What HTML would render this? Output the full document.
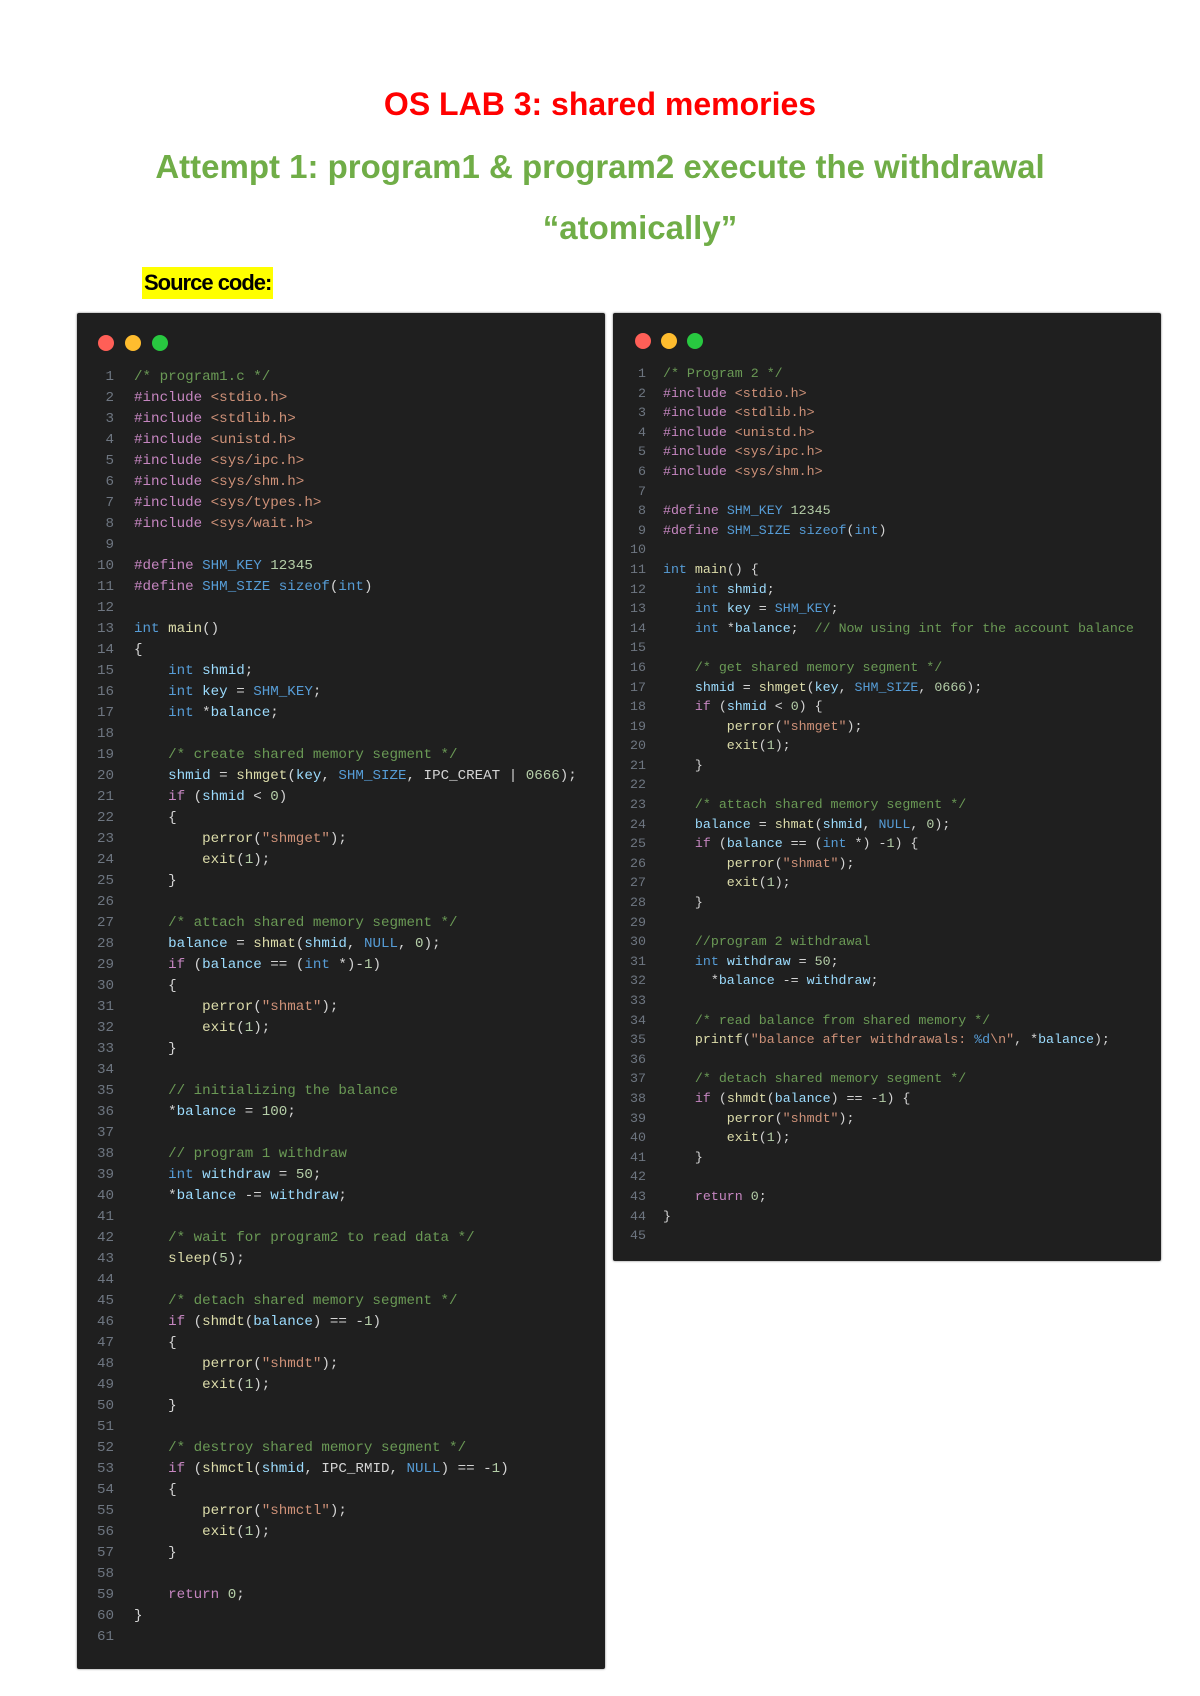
<!DOCTYPE html>
<html><head><meta charset="utf-8"><style>
body{margin:0;background:#fff;width:1200px;height:1696px;position:relative;overflow:hidden;font-family:"Liberation Sans",sans-serif}
.t{position:absolute;left:0;width:1200px;text-align:center;font-weight:bold;letter-spacing:0}
.panel{position:absolute;background:#1f1f1f;border-radius:2px;box-shadow:0 0 2px #777}
.dot{position:absolute;width:16px;height:16px;border-radius:50%}
pre{position:absolute;margin:0;font-family:"Liberation Mono",monospace;color:#d4d4d4;white-space:pre}
.n{color:#6e7681;display:inline-block;text-align:right}
.L .n{width:28px;margin-right:3px}
.R .n{width:22px;margin-right:1px}
.c{color:#6a9955}.p{color:#c586c0}.k{color:#569cd6}.s{color:#ce9178}.m{color:#b5cea8}.v{color:#9cdcfe}.f{color:#dcdcaa}
</style></head><body>
<div class="t" style="top:86px;font-size:32px;color:#ff0000">OS LAB 3: shared memories</div>
<div class="t" style="top:148px;font-size:33px;color:#70ad47">Attempt 1: program1 &amp; program2 execute the withdrawal</div>
<div class="t" style="top:209px;font-size:33px;color:#70ad47;padding-left:40px">“atomically”</div>
<div style="position:absolute;left:142px;top:267px;background:#ffff00;font-weight:bold;font-size:22px;letter-spacing:-1px;padding:1px 2px;line-height:30px">Source code:</div>

<div class="panel" style="left:77px;top:313px;width:528px;height:1356px">
<div class="dot" style="left:21px;top:22px;background:#ff5f57"></div>
<div class="dot" style="left:48px;top:22px;background:#febc2e"></div>
<div class="dot" style="left:75px;top:22px;background:#28c840"></div>
<pre class="L" style="left:9px;top:54px;font-size:14.2px;line-height:21px">
<span class="n">1</span>  <span class="c">/* program1.c */</span>
<span class="n">2</span>  <span class="p">#include</span> <span class="s">&lt;stdio.h&gt;</span>
<span class="n">3</span>  <span class="p">#include</span> <span class="s">&lt;stdlib.h&gt;</span>
<span class="n">4</span>  <span class="p">#include</span> <span class="s">&lt;unistd.h&gt;</span>
<span class="n">5</span>  <span class="p">#include</span> <span class="s">&lt;sys/ipc.h&gt;</span>
<span class="n">6</span>  <span class="p">#include</span> <span class="s">&lt;sys/shm.h&gt;</span>
<span class="n">7</span>  <span class="p">#include</span> <span class="s">&lt;sys/types.h&gt;</span>
<span class="n">8</span>  <span class="p">#include</span> <span class="s">&lt;sys/wait.h&gt;</span>
<span class="n">9</span>
<span class="n">10</span>  <span class="p">#define</span> <span class="k">SHM_KEY</span> <span class="m">12345</span>
<span class="n">11</span>  <span class="p">#define</span> <span class="k">SHM_SIZE</span> <span class="k">sizeof</span>(<span class="k">int</span>)
<span class="n">12</span>
<span class="n">13</span>  <span class="k">int</span> <span class="f">main</span>()
<span class="n">14</span>  {
<span class="n">15</span>      <span class="k">int</span> <span class="v">shmid</span>;
<span class="n">16</span>      <span class="k">int</span> <span class="v">key</span> = <span class="k">SHM_KEY</span>;
<span class="n">17</span>      <span class="k">int</span> *<span class="v">balance</span>;
<span class="n">18</span>
<span class="n">19</span>      <span class="c">/* create shared memory segment */</span>
<span class="n">20</span>      <span class="v">shmid</span> = <span class="f">shmget</span>(<span class="v">key</span>, <span class="k">SHM_SIZE</span>, IPC_CREAT | <span class="m">0666</span>);
<span class="n">21</span>      <span class="p">if</span> (<span class="v">shmid</span> &lt; <span class="m">0</span>)
<span class="n">22</span>      {
<span class="n">23</span>          <span class="f">perror</span>(<span class="s">"shmget"</span>);
<span class="n">24</span>          <span class="f">exit</span>(<span class="m">1</span>);
<span class="n">25</span>      }
<span class="n">26</span>
<span class="n">27</span>      <span class="c">/* attach shared memory segment */</span>
<span class="n">28</span>      <span class="v">balance</span> = <span class="f">shmat</span>(<span class="v">shmid</span>, <span class="k">NULL</span>, <span class="m">0</span>);
<span class="n">29</span>      <span class="p">if</span> (<span class="v">balance</span> == (<span class="k">int</span> *)-<span class="m">1</span>)
<span class="n">30</span>      {
<span class="n">31</span>          <span class="f">perror</span>(<span class="s">"shmat"</span>);
<span class="n">32</span>          <span class="f">exit</span>(<span class="m">1</span>);
<span class="n">33</span>      }
<span class="n">34</span>
<span class="n">35</span>      <span class="c">// initializing the balance</span>
<span class="n">36</span>      *<span class="v">balance</span> = <span class="m">100</span>;
<span class="n">37</span>
<span class="n">38</span>      <span class="c">// program 1 withdraw</span>
<span class="n">39</span>      <span class="k">int</span> <span class="v">withdraw</span> = <span class="m">50</span>;
<span class="n">40</span>      *<span class="v">balance</span> -= <span class="v">withdraw</span>;
<span class="n">41</span>
<span class="n">42</span>      <span class="c">/* wait for program2 to read data */</span>
<span class="n">43</span>      <span class="f">sleep</span>(<span class="m">5</span>);
<span class="n">44</span>
<span class="n">45</span>      <span class="c">/* detach shared memory segment */</span>
<span class="n">46</span>      <span class="p">if</span> (<span class="f">shmdt</span>(<span class="v">balance</span>) == -<span class="m">1</span>)
<span class="n">47</span>      {
<span class="n">48</span>          <span class="f">perror</span>(<span class="s">"shmdt"</span>);
<span class="n">49</span>          <span class="f">exit</span>(<span class="m">1</span>);
<span class="n">50</span>      }
<span class="n">51</span>
<span class="n">52</span>      <span class="c">/* destroy shared memory segment */</span>
<span class="n">53</span>      <span class="p">if</span> (<span class="f">shmctl</span>(<span class="v">shmid</span>, IPC_RMID, <span class="k">NULL</span>) == -<span class="m">1</span>)
<span class="n">54</span>      {
<span class="n">55</span>          <span class="f">perror</span>(<span class="s">"shmctl"</span>);
<span class="n">56</span>          <span class="f">exit</span>(<span class="m">1</span>);
<span class="n">57</span>      }
<span class="n">58</span>
<span class="n">59</span>      <span class="p">return</span> <span class="m">0</span>;
<span class="n">60</span>  }
<span class="n">61</span>
</pre>
</div>

<div class="panel" style="left:613px;top:313px;width:548px;height:948px">
<div class="dot" style="left:22px;top:20px;background:#ff5f57"></div>
<div class="dot" style="left:48px;top:20px;background:#febc2e"></div>
<div class="dot" style="left:74px;top:20px;background:#28c840"></div>
<pre class="R" style="left:11px;top:51px;font-size:13.3px;line-height:19.6px">
<span class="n">1</span>  <span class="c">/* Program 2 */</span>
<span class="n">2</span>  <span class="p">#include</span> <span class="s">&lt;stdio.h&gt;</span>
<span class="n">3</span>  <span class="p">#include</span> <span class="s">&lt;stdlib.h&gt;</span>
<span class="n">4</span>  <span class="p">#include</span> <span class="s">&lt;unistd.h&gt;</span>
<span class="n">5</span>  <span class="p">#include</span> <span class="s">&lt;sys/ipc.h&gt;</span>
<span class="n">6</span>  <span class="p">#include</span> <span class="s">&lt;sys/shm.h&gt;</span>
<span class="n">7</span>
<span class="n">8</span>  <span class="p">#define</span> <span class="k">SHM_KEY</span> <span class="m">12345</span>
<span class="n">9</span>  <span class="p">#define</span> <span class="k">SHM_SIZE</span> <span class="k">sizeof</span>(<span class="k">int</span>)
<span class="n">10</span>
<span class="n">11</span>  <span class="k">int</span> <span class="f">main</span>() {
<span class="n">12</span>      <span class="k">int</span> <span class="v">shmid</span>;
<span class="n">13</span>      <span class="k">int</span> <span class="v">key</span> = <span class="k">SHM_KEY</span>;
<span class="n">14</span>      <span class="k">int</span> *<span class="v">balance</span>;  <span class="c">// Now using int for the account balance</span>
<span class="n">15</span>
<span class="n">16</span>      <span class="c">/* get shared memory segment */</span>
<span class="n">17</span>      <span class="v">shmid</span> = <span class="f">shmget</span>(<span class="v">key</span>, <span class="k">SHM_SIZE</span>, <span class="m">0666</span>);
<span class="n">18</span>      <span class="p">if</span> (<span class="v">shmid</span> &lt; <span class="m">0</span>) {
<span class="n">19</span>          <span class="f">perror</span>(<span class="s">"shmget"</span>);
<span class="n">20</span>          <span class="f">exit</span>(<span class="m">1</span>);
<span class="n">21</span>      }
<span class="n">22</span>
<span class="n">23</span>      <span class="c">/* attach shared memory segment */</span>
<span class="n">24</span>      <span class="v">balance</span> = <span class="f">shmat</span>(<span class="v">shmid</span>, <span class="k">NULL</span>, <span class="m">0</span>);
<span class="n">25</span>      <span class="p">if</span> (<span class="v">balance</span> == (<span class="k">int</span> *) -<span class="m">1</span>) {
<span class="n">26</span>          <span class="f">perror</span>(<span class="s">"shmat"</span>);
<span class="n">27</span>          <span class="f">exit</span>(<span class="m">1</span>);
<span class="n">28</span>      }
<span class="n">29</span>
<span class="n">30</span>      <span class="c">//program 2 withdrawal</span>
<span class="n">31</span>      <span class="k">int</span> <span class="v">withdraw</span> = <span class="m">50</span>;
<span class="n">32</span>        *<span class="v">balance</span> -= <span class="v">withdraw</span>;
<span class="n">33</span>
<span class="n">34</span>      <span class="c">/* read balance from shared memory */</span>
<span class="n">35</span>      <span class="f">printf</span>(<span class="s">"balance after withdrawals: </span><span class="k">%d</span><span class="s">\n"</span>, *<span class="v">balance</span>);
<span class="n">36</span>
<span class="n">37</span>      <span class="c">/* detach shared memory segment */</span>
<span class="n">38</span>      <span class="p">if</span> (<span class="f">shmdt</span>(<span class="v">balance</span>) == -<span class="m">1</span>) {
<span class="n">39</span>          <span class="f">perror</span>(<span class="s">"shmdt"</span>);
<span class="n">40</span>          <span class="f">exit</span>(<span class="m">1</span>);
<span class="n">41</span>      }
<span class="n">42</span>
<span class="n">43</span>      <span class="p">return</span> <span class="m">0</span>;
<span class="n">44</span>  }
<span class="n">45</span>
</pre>
</div>
</body></html>
